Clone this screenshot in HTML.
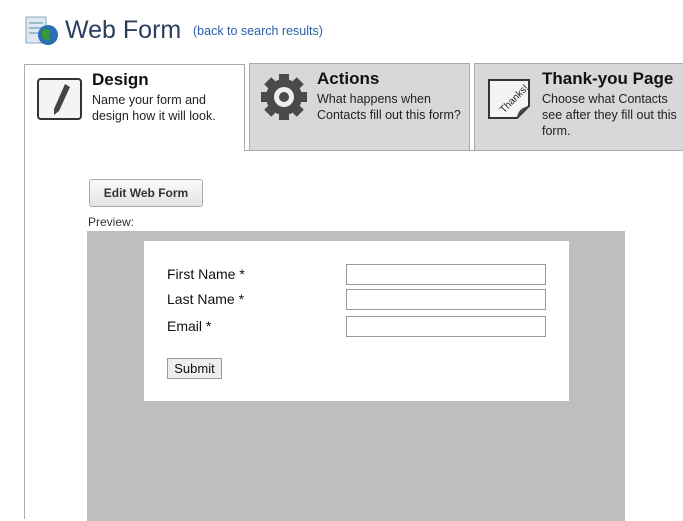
<!DOCTYPE html>
<html><head><style>
body{margin:0;width:683px;height:519px;overflow:hidden;background:#fff;font-family:"Liberation Sans",sans-serif;position:relative}
.a{position:absolute}
.t{font-size:12.5px;color:#222;line-height:16px}
.h{font-size:17px;font-weight:bold;color:#111}
</style></head><body>
<svg class="a" style="left:24px;top:14px" width="34" height="34" viewBox="0 0 34 34">
<rect x="2" y="3" width="20" height="26" fill="#dde8f4" stroke="#8ab" />
<rect x="5" y="8" width="14" height="2" fill="#9bc"/><rect x="5" y="13" width="14" height="2" fill="#9bc"/><rect x="5" y="18" width="10" height="2" fill="#9bc"/>
<circle cx="24" cy="21" r="10" fill="#2a6fb0"/><path d="M18 16 q5 -3 8 2 q-3 4 1 8 q-5 2 -9-3z" fill="#3a9a3a"/>
</svg>
<div class="a" style="left:65px;top:16px;font-size:25px;color:#2b3f5c">Web Form</div>
<div class="a" style="left:193px;top:24px;font-size:12.5px;color:#2a5fa8">(back to search results)</div>

<div class="a" style="left:24px;top:64px;width:219px;height:86px;border-left:1px solid #aaa;border-top:1px solid #aaa;border-right:1px solid #aaa;"></div>
<div class="a" style="left:244px;top:150px;width:440px;height:1px;background:#aaa"></div>
<div class="a" style="left:24px;top:150px;height:369px;width:1px;background:#aaa"></div>

<svg class="a" style="left:37px;top:78px" width="46" height="42"><rect x="1" y="1" width="43" height="40" rx="3" fill="#f4f4f4" stroke="#333" stroke-width="2"/><path d="M28 6 l5 3 -11 24 -5 4 0 -6z" fill="#444"/></svg>
<div class="a h" style="left:92px;top:70px">Design</div>
<div class="a t" style="left:92px;top:92px">Name your form and<br>design how it will look.</div>

<div class="a" style="left:249px;top:63px;width:219px;height:86px;background:#d8d8d8;border:1px solid #aaa"></div>
<svg class="a" style="left:261px;top:73px" width="46" height="48" viewBox="0 0 46 48"><g fill="#4a4a4a" transform="translate(23,24)"><circle r="18"/><g id="g"><rect x="-5" y="-23" width="10" height="8"/></g><use href="#g" transform="rotate(45)"/><use href="#g" transform="rotate(90)"/><use href="#g" transform="rotate(135)"/><use href="#g" transform="rotate(180)"/><use href="#g" transform="rotate(225)"/><use href="#g" transform="rotate(270)"/><use href="#g" transform="rotate(315)"/></g><circle cx="23" cy="24" r="10" fill="#eee"/><circle cx="23" cy="24" r="5" fill="#4a4a4a"/></svg>
<div class="a h" style="left:317px;top:69px">Actions</div>
<div class="a t" style="left:317px;top:91px">What happens when<br>Contacts fill out this form?</div>

<div class="a" style="left:474px;top:63px;width:215px;height:86px;background:#d8d8d8;border:1px solid #aaa"></div>
<svg class="a" style="left:486px;top:76px" width="46" height="44"><path d="M3 4 h40 v26 l-12 12 h-28z" fill="#f4f4f4" stroke="#333" stroke-width="2"/><path d="M31 42 q1-10 12-12z" fill="#444"/><text x="8" y="30" font-size="10" font-family="Liberation Sans" transform="rotate(-45 22 22)" fill="#222">Thanks!</text></svg>
<div class="a h" style="left:542px;top:69px">Thank-you Page</div>
<div class="a t" style="left:542px;top:91px">Choose what Contacts<br>see after they fill out this<br>form.</div>

<div class="a" style="left:89px;top:179px;width:112px;height:26px;border:1px solid #aaa;border-radius:3px;background:linear-gradient(#fafafa,#e4e4e4);font-size:12px;font-weight:bold;color:#333;text-align:center;line-height:26px">Edit Web Form</div>
<div class="a" style="left:88px;top:215px;font-size:12px;color:#333">Preview:</div>
<div class="a" style="left:87px;top:231px;width:538px;height:290px;background:#bebebe"></div>
<div class="a" style="left:144px;top:241px;width:425px;height:160px;background:#fff"></div>
<div class="a" style="left:167px;top:266px;font-size:14px;color:#111">First Name *</div>
<div class="a" style="left:167px;top:291px;font-size:14px;color:#111">Last Name *</div>
<div class="a" style="left:167px;top:318px;font-size:14px;color:#111">Email *</div>
<div class="a" style="left:346px;top:264px;width:198px;height:19px;border:1px solid #999"></div>
<div class="a" style="left:346px;top:289px;width:198px;height:19px;border:1px solid #999"></div>
<div class="a" style="left:346px;top:316px;width:198px;height:19px;border:1px solid #999"></div>
<div class="a" style="left:167px;top:358px;width:53px;height:19px;border:1px solid #999;background:#eee;font-size:13px;text-align:center;line-height:19px;color:#111">Submit</div>
</body></html>
